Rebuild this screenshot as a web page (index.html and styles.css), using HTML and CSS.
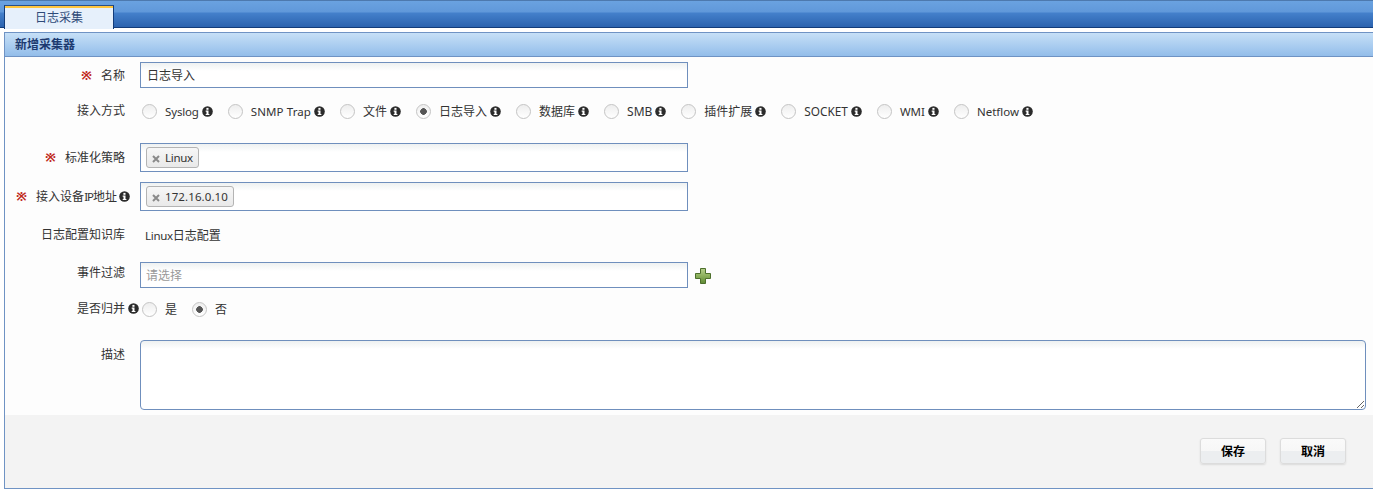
FILE: index.html
```html
<!DOCTYPE html>
<html lang="zh-CN">
<head>
<meta charset="utf-8">
<title>新增采集器</title>
<link rel="stylesheet" href="styles.css">
</head>
<body>
<svg class="defs" width="0" height="0" aria-hidden="true">
  <symbol id="info" viewBox="0 0 11 11">
    <circle cx="5.5" cy="5.5" r="5.3" fill="#2b2b2b"/>
    <rect x="4.4" y="1.9" width="2.1" height="1.9" fill="#fff"/>
    <path d="M3.7 4.6h2.8v3.4h.9v1.1H3.7V8h.8V5.7h-.8z" fill="#fff"/>
  </symbol>
  <symbol id="close" viewBox="0 0 8 8">
    <path d="M1 1l6 6M7 1L1 7" stroke="#8a8a8a" stroke-width="2" fill="none"/>
  </symbol>
</svg>
<div class="tabbar"><div class="tab">日志采集</div></div>
<main class="panel">
  <h1 class="panel-title">新增采集器</h1>
  <form class="form">
    <div class="row row-name">
      <div class="label"><span class="req">※</span>名称</div>
      <input class="field" type="text" value="日志导入">
    </div>
    <div class="row row-method">
      <div class="label">接入方式</div>
      <div class="options">
        <label class="opt"><input type="radio" name="m"><span class="latin tight">Syslog</span><svg class="info"><use href="#info"/></svg></label>
        <label class="opt"><input type="radio" name="m"><span class="latin snmp">SNMP Trap</span><svg class="info"><use href="#info"/></svg></label>
        <label class="opt"><input type="radio" name="m"><span>文件</span><svg class="info"><use href="#info"/></svg></label>
        <label class="opt"><input type="radio" name="m" checked><span>日志导入</span><svg class="info"><use href="#info"/></svg></label>
        <label class="opt"><input type="radio" name="m"><span>数据库</span><svg class="info"><use href="#info"/></svg></label>
        <label class="opt"><input type="radio" name="m"><span class="latin wide">SMB</span><svg class="info"><use href="#info"/></svg></label>
        <label class="opt"><input type="radio" name="m"><span>插件扩展</span><svg class="info"><use href="#info"/></svg></label>
        <label class="opt"><input type="radio" name="m"><span class="latin socket">SOCKET</span><svg class="info"><use href="#info"/></svg></label>
        <label class="opt"><input type="radio" name="m"><span class="latin">WMI</span><svg class="info"><use href="#info"/></svg></label>
        <label class="opt"><input type="radio" name="m"><span class="latin">Netflow</span><svg class="info"><use href="#info"/></svg></label>
      </div>
    </div>
    <div class="row row-policy">
      <div class="label"><span class="req">※</span>标准化策略</div>
      <div class="field tags"><span class="tag"><svg class="x"><use href="#close"/></svg><span class="latin linux">Linux</span></span></div>
    </div>
    <div class="row row-ip">
      <div class="label label-ip"><span class="req">※</span>接入设备<span class="latin ip">IP</span>地址<svg class="info info-tight"><use href="#info"/></svg></div>
      <div class="field tags"><span class="tag"><svg class="x"><use href="#close"/></svg><span class="latin num">172.16.0.10</span></span></div>
    </div>
    <div class="row row-kb">
      <div class="label">日志配置知识库</div>
      <div class="value"><span class="latin linux">Linux</span>日志配置</div>
    </div>
    <div class="row row-filter">
      <div class="label label-top">事件过滤</div>
      <input class="field field-select" type="text" placeholder="请选择">
      <svg class="plus" viewBox="0 0 16 16" width="16" height="16" aria-hidden="true">
        <defs><linearGradient id="g" x1="0" y1="0" x2="0" y2="1"><stop offset="0" stop-color="#b5cf8c"/><stop offset=".5" stop-color="#8cb05c"/><stop offset="1" stop-color="#5f8a35"/></linearGradient></defs>
        <path d="M5.5.5h5v5h5v5h-5v5h-5v-5h-5v-5h5z" fill="url(#g)" stroke="#4d6f2c"/>
      </svg>
    </div>
    <div class="row row-merge">
      <div class="label label-merge">是否归并<svg class="info"><use href="#info"/></svg></div>
      <div class="options">
        <label class="opt opt-small"><input type="radio" name="h"><span>是</span></label>
        <label class="opt opt-small"><input type="radio" name="h" checked><span>否</span></label>
      </div>
    </div>
    <div class="row row-desc">
      <div class="label label-top">描述</div>
      <textarea class="field area"></textarea>
    </div>
  </form>
  <footer class="footer">
    <button class="btn" type="button">保存</button>
    <button class="btn" type="button">取消</button>
  </footer>
</main>
</body>
</html>
```
FILE: styles.css
```css
* { box-sizing: border-box; }
html, body { margin: 0; padding: 0; }
body {
  height: 490px;
  overflow: hidden;
  background: #fff;
  font-family: "Noto Sans", "Noto Sans CJK SC", sans-serif;
  font-size: 12px;
  color: #333;
}
.latin { font-size: 11.5px; }
.tight { letter-spacing: -.15px; }
.snmp { letter-spacing: .1px; }
.wide { font-size: 12px; }
.socket { font-size: 11.8px; }
.linux { letter-spacing: -.3px; }
.num { letter-spacing: .1px; }
.ip { letter-spacing: -1px; }
.defs { display: block; height: 0; }
.tabbar {
  height: 28px;
  padding: 4px 0 0 4px;
  border-top: 1px solid #4d79ae;
  border-bottom: 1px solid #123c7a;
  background: linear-gradient(to bottom, #6aa2e0 0, #6098da 11px, #4480cb 12px, #2b63af 100%);
}
.tab {
  width: 110px;
  height: 24px;
  border: 1px solid #123c7a;
  border-bottom: 0;
  border-top-color: #2a4f85;
  background: linear-gradient(to bottom, #ffc53d 0, #ffc53d 2px, #e6f0fb 2px);
  text-align: center;
  line-height: 24px;
  font-size: 12px;
  color: #2e4a78;
}
.panel {
  margin: 4px 0 0 4px;
  height: 457px;
  border: 1px solid #6f93c4;
  border-right: 0;
  display: flex;
  flex-direction: column;
}
.panel-title {
  margin: 0;
  height: 24px;
  flex: none;
  padding-left: 10px;
  line-height: 23px;
  font-size: 12px;
  font-weight: 700;
  color: #1d3a70;
  border-bottom: 1px solid #6f93c4;
  background: linear-gradient(to bottom, #c6e0f7, #93bdea);
}
.form {
  flex: none;
  height: 358px;
  padding-top: 5px;
  background: #fdfdfd;
}
.row {
  display: flex;
  align-items: center;
  padding-right: 7px;
}
.label {
  flex: none;
  width: 120px;
  margin-right: 15px;
  text-align: right;
  white-space: nowrap;
  line-height: 16px;
}
.label-ip { margin-right: 10px; width: 125px; }
.label-merge { margin-right: 1px; width: 134px; }
.label-top { align-self: flex-start; }
.req {
  color: #c0281c;
  font-size: 13px;
  font-weight: 700;
  margin-right: 9px;
}
.info {
  width: 11px;
  height: 11px;
  margin-left: 3px;
  vertical-align: -1px;
  flex: none;
}
.info-tight { margin-left: 2px; }
.field {
  width: 548px;
  border: 1px solid #6f8fbd;
  background: linear-gradient(to bottom, #eef1f1 0, #fff 8px);
  font: inherit;
  color: #333;
  padding: 0 6px;
  outline: 0;
  border-radius: 0;
}
input.field { height: 26px; }
input.field::placeholder { color: #999; opacity: 1; }
.field-select { padding-left: 5px; }
.row-name { height: 26px; }
.row-method { margin-top: 12px; height: 22px; }
.row-policy { margin-top: 21px; }
.row-ip { margin-top: 10px; }
.row-kb { margin-top: 14px; height: 20px; }
.row-filter { margin-top: 17px; }
.row-filter .label-top { padding-top: 3px; }
.row-merge { margin-top: 11px; height: 20px; }
.row-desc { margin-top: 21px; align-items: flex-start; }
.row-desc .label-top { padding-top: 7px; }
.tags {
  display: flex;
  align-items: center;
  height: 29px;
  padding: 0 5px;
}
.tag {
  display: inline-flex;
  align-items: center;
  height: 21px;
  padding: 0 5px 0 4px;
  border: 1px solid #b4b4b4;
  border-radius: 3px;
  background: linear-gradient(to bottom, #f7f7f7, #e9e9e9);
  color: #333;
}
.x {
  width: 8px;
  height: 8px;
  margin: 2px 5px 0 1px;
  flex: none;
}
.value { padding-left: 5px; }
.options {
  display: flex;
  align-items: center;
  gap: 15px;
  margin-left: 2px;
}
.opt { display: inline-flex; align-items: center; white-space: nowrap; }
.opt input {
  appearance: none;
  -webkit-appearance: none;
  width: 15px;
  height: 15px;
  margin: 0 8px 0 0;
  border: 1px solid #c4c4c4;
  border-radius: 50%;
  background: linear-gradient(to bottom, #eee, #fff);
  flex: none;
}
.opt input:checked {
  background: radial-gradient(circle, #555 0, #555 3px, transparent 3.6px), linear-gradient(to bottom, #eee, #fff);
}
.plus { margin-left: 7px; margin-top: 1px; flex: none; }
.area {
  flex: 1;
  width: auto;
  height: 70px;
  border-radius: 4px;
  resize: both;
}
.footer {
  flex: 1;
  display: flex;
  justify-content: flex-end;
  align-items: flex-start;
  gap: 14px;
  padding: 23px 27px 0 0;
  background: #f3f3f3;
}
.btn {
  width: 66px;
  height: 26px;
  padding: 0;
  border: 1px solid #dcdcdc;
  border-radius: 3px;
  background: linear-gradient(to bottom, #fafafa 0, #f7f7f7 50%, #eceef0 50%, #eceef0 100%);
  box-shadow: 0 1px 2px rgba(0,0,0,.1);
  font: inherit;
  font-size: 12px;
  font-weight: 700;
  color: #000;
}
```
